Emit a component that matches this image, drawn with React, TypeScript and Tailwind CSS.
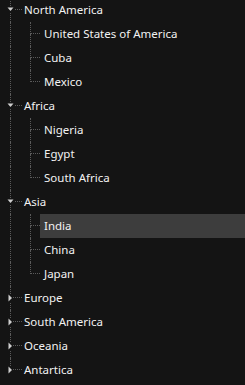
import React from "react";

type Node = { label: string; children?: string[]; expanded?: boolean };

const data: Node[] = [
  { label: "North America", expanded: true, children: ["United States of America", "Cuba", "Mexico"] },
  { label: "Africa", expanded: true, children: ["Nigeria", "Egypt", "South Africa"] },
  { label: "Asia", expanded: true, children: ["India", "China", "Japan"] },
  { label: "Europe" },
  { label: "South America" },
  { label: "Oceania" },
  { label: "Antartica" },
];

const LINE = "border-dotted border-[#5a5a5a]";

function Elbow({ width, last, children }: { width: string; last: boolean; children?: React.ReactNode }) {
  return (
    <div className={`relative flex flex-col ${width}`}>
      <div className={`h-3 border-l border-b ${LINE}`} />
      <div className={`flex-1 ${last ? "" : `border-l ${LINE}`}`} />
      {children}
    </div>
  );
}

function DownTri() {
  return (
    <svg className="absolute -left-[3px] top-[9px]" width="7" height="5" viewBox="0 0 7 5">
      <rect x="0" y="0" width="7" height="5" fill="#141414" />
      <polygon points="0.5,0.5 6.5,0.5 3.5,4" fill="#cfcfcf" />
    </svg>
  );
}
function RightTri() {
  return (
    <svg className="absolute -left-[2px] top-[8px]" width="5" height="8" viewBox="0 0 5 8">
      <rect x="0" y="0" width="5" height="8" fill="#141414" />
      <polygon points="0.5,0.5 4,4 0.5,7.5" fill="#cfcfcf" />
    </svg>
  );
}

export default function App() {
  return (
    <div
      className="w-[245px] h-[385px] bg-[#141414] overflow-hidden text-[#f2f2f2] text-[11.5px]"
      style={{ fontFamily: '"Noto Sans", "Open Sans", sans-serif' }}
    >
      <div className="-mt-[2px] flex flex-col">
        {data.map((n, i) => {
          const lastTop = i === data.length - 1;
          return (
            <React.Fragment key={n.label}>
              <div className="flex h-6">
                <div className="w-[10px]" />
                <Elbow width="w-[12px]" last={lastTop}>
                  {n.expanded ? <DownTri /> : <RightTri />}
                </Elbow>
                <div className="flex items-center pl-[2px]">{n.label}</div>
              </div>
              {n.expanded &&
                n.children!.map((c, j) => {
                  const last = j === n.children!.length - 1;
                  const sel = c === "India";
                  return (
                    <div key={c} className="flex h-6">
                      <div className="w-[10px]" />
                      <div className={`w-[20px] border-l ${LINE}`} />
                      <Elbow width="w-[10px]" last={last} />
                      <div className={`flex-1 flex items-center pl-[4px] ${sel ? "bg-[#3d3d3d]" : ""}`}>{c}</div>
                    </div>
                  );
                })}
            </React.Fragment>
          );
        })}
      </div>
    </div>
  );
}
